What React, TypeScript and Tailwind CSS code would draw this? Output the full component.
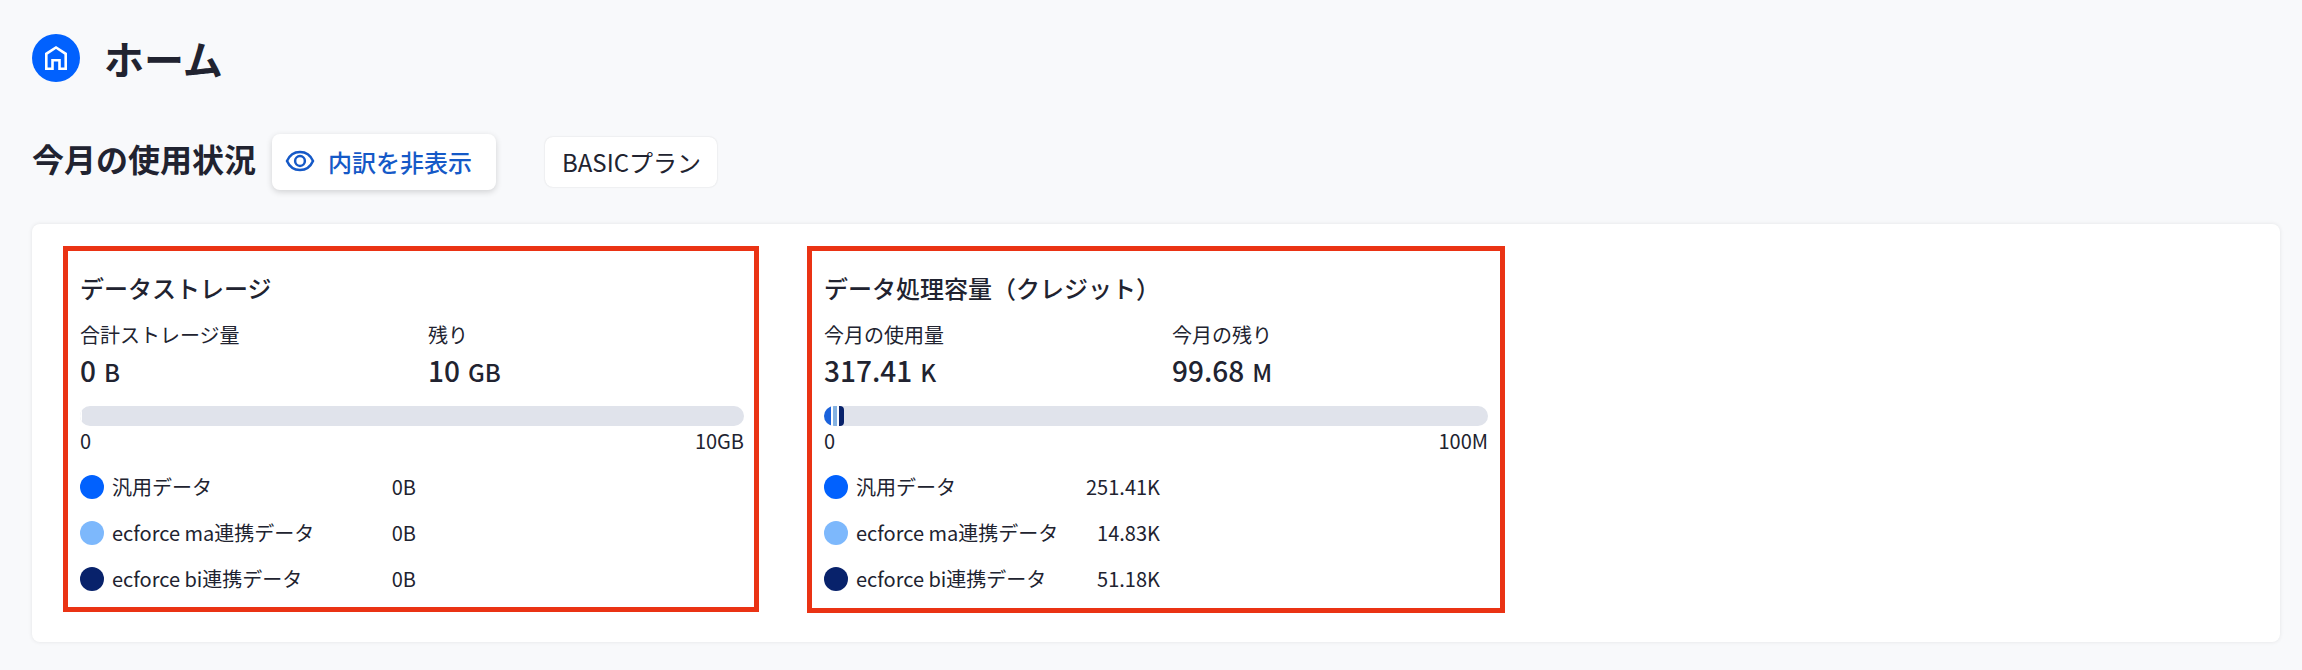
type Item = { label: string; value: string; dot: string };
type Stat = { label: string; value: string; unit: string };

type UsagePanelProps = {
    title: string;
    stats: Stat[];
    max: string;
    items: Item[];
    className?: string;
    children?: React.ReactNode;
};

const storageItems: Item[] = [
    { label: '汎用データ', value: '0B', dot: 'bg-[#0161fe]' },
    { label: 'ecforce ma連携データ', value: '0B', dot: 'bg-[#7db8fc]' },
    { label: 'ecforce bi連携データ', value: '0B', dot: 'bg-[#08226b]' },
];

const creditItems: Item[] = [
    { label: '汎用データ', value: '251.41K', dot: 'bg-[#0161fe]' },
    { label: 'ecforce ma連携データ', value: '14.83K', dot: 'bg-[#7db8fc]' },
    { label: 'ecforce bi連携データ', value: '51.18K', dot: 'bg-[#08226b]' },
];

function HomeIcon() {
    return (
        <svg width="24" height="26" viewBox="0 0 24 26" fill="none" stroke="#fff" strokeWidth="2.6">
            <path d="M2.3 23.7V8.8L12 2.5l9.7 6.3v14.9h-6.2v-8.4h-7v8.4z" />
        </svg>
    );
}

function EyeIcon() {
    return (
        <svg className="-mt-0.5" width="30" height="22" viewBox="0 0 30 22" fill="none" stroke="#1559c7" strokeWidth="2.5">
            <path d="M2 11C4.6 5 9.4 2 15 2s10.4 3 13 9c-2.6 6-7.4 9-13 9S4.6 17 2 11z" />
            <circle cx="15" cy="11" r="4.9" />
        </svg>
    );
}

function UsagePanel({ title, stats, max, items, className, children }: UsagePanelProps) {
    return (
        <section className={`border-5 border-[#ea3314] pl-3 pt-[19px] ${className}`}>
            <div className="w-[664px]">
                <h3 className="text-2xl leading-9 font-medium">{title}</h3>

                <div className="mt-3.5 grid grid-cols-[348px_1fr]">
                    {stats.map((s) => (
                        <div key={s.label}>
                            <div className="text-xl leading-[30px]">{s.label}</div>
                            <div className="flex h-10 items-baseline gap-2 font-medium leading-10">
                                <span className="text-[28px] leading-10">{s.value}</span>
                                <span className="text-2xl leading-10">{s.unit}</span>
                            </div>
                        </div>
                    ))}
                </div>

                {/* gauge */}
                <div className="mt-4 h-5 rounded-full bg-[#e0e3eb] overflow-hidden flex">{children}</div>
                <div className="flex justify-between text-xl leading-[30px]">
                    <span>0</span>
                    <span>{max}</span>
                </div>

                {/* breakdown */}
                <ul className="mt-2 w-[336px] text-xl">
                    {items.map((item) => (
                        <li key={item.label} className="flex h-[46px] items-center">
                            <span className={`size-6 rounded-full ${item.dot}`} />
                            <span className="ml-2">{item.label}</span>
                            <span className="ml-auto">{item.value}</span>
                        </li>
                    ))}
                </ul>
            </div>
        </section>
    );
}

export default function App() {
    return (
        <div lang="ja" className="h-[670px] bg-[#f8f9fb] px-8 pt-[34px] text-[#212330] font-['Noto_Sans_CJK_JP',sans-serif]">
            <header className="flex h-12 items-center">
                <div className="flex size-12 items-center justify-center rounded-full bg-[#0161fe]">
                    <HomeIcon />
                </div>
                <h1 className="ml-6 text-[40px] leading-12 font-bold">ホーム</h1>
            </header>

            <div className="mt-13 flex h-14 items-center">
                <h2 className="text-[32px] leading-12 font-bold -mt-2">今月の使用状況</h2>
                <button className="ml-4 flex h-14 w-56 items-center rounded-lg bg-white pl-[13px] text-2xl font-medium text-[#1559c7] shadow-[0_2px_6px_rgba(0,0,0,0.16)]">
                    <EyeIcon />
                    <span className="ml-[13px]">内訳を非表示</span>
                </button>
                <div className="ml-[49px] flex h-[50px] w-[172px] items-center justify-center rounded-lg bg-white pl-px text-2xl shadow-[0_0_2px_rgba(0,0,0,0.14)]">
                    BASICプラン
                </div>
            </div>

            <main className="mt-[34px] flex h-[418px] w-[2248px] items-start gap-12 rounded-lg bg-white pl-[31px] pt-[22px] shadow-[0_0_4px_rgba(0,0,0,0.09)]">
                <UsagePanel
                    title="データストレージ"
                    stats={[
                        { label: '合計ストレージ量', value: '0', unit: 'B' },
                        { label: '残り', value: '10', unit: 'GB' },
                    ]}
                    max="10GB"
                    items={storageItems}
                    className="h-[366px] pr-2.5"
                >
                    <div className="w-0.5 bg-white" />
                </UsagePanel>
                <UsagePanel
                    title="データ処理容量（クレジット）"
                    stats={[
                        { label: '今月の使用量', value: '317.41', unit: 'K' },
                        { label: '今月の残り', value: '99.68', unit: 'M' },
                    ]}
                    max="100M"
                    items={creditItems}
                    className="h-[367px] pr-3"
                >
                    <div className="flex gap-0.5 rounded-r-[4px] bg-white overflow-hidden">
                        <div className="w-[7px] bg-[#1a62dc]" />
                        <div className="w-1 bg-[#84b2e2]" />
                        <div className="w-[5px] bg-[#08226b]" />
                    </div>
                </UsagePanel>
            </main>
        </div>
    );
}
